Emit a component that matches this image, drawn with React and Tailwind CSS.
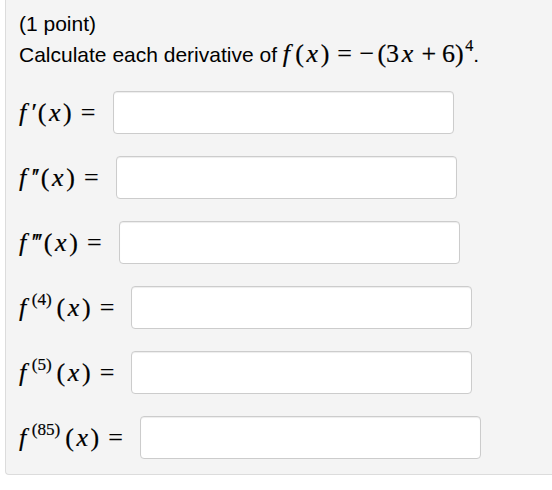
import React from "react";

const Op = ({ children, wide }) => (
  <span className={wide ? "mx-[0.35em] not-italic" : "mx-[0.22em] not-italic"}>{children}</span>
);

const X = () => <span className="italic mx-[0.1em]">x</span>;

const F = ({ order }) => (
  <span className="italic">
    <span className={order ? "mr-[0.12em]" : "mr-[0.2em]"}>f</span>
    {order && (
      <sup className="not-italic text-[0.66em] top-[-0.62em] ml-[0.14em] mr-[0.28em]">{order}</sup>
    )}
  </span>
);

const Primes = ({ n }) => (
  <span className="not-italic tracking-[-0.1em] mr-[0.12em]">{"\u2032".repeat(n)}</span>
);

const Arg = () => (
  <span>
    (<X />)
  </span>
);

const rows = [
  { label: (<><F /><Primes n={1} /><Arg /></>) },
  { label: (<><F /><Primes n={2} /><Arg /></>) },
  { label: (<><F /><Primes n={3} /><Arg /></>) },
  { label: (<><F order="(4)" /><Arg /></>) },
  { label: (<><F order="(5)" /><Arg /></>) },
  { label: (<><F order="(85)" /><Arg /></>) },
];

export default function App() {
  return (
    <div className="w-[552px] h-[490px] bg-white overflow-hidden">
      <div className="ml-[5px] w-[547px] h-[475px] bg-[#f4f4f4] border-l border-b border-[#dcdcdc] rounded-bl-[4px] pl-[13px] pt-[9px] font-['Liberation_Sans',Arial,sans-serif] text-[21px] text-black">
        <div className="leading-[30px]">(1 point)</div>
        <div className="leading-[30px] whitespace-nowrap">
          Calculate each derivative of{" "}
          <span className="[font-family:'Liberation_Serif',serif] text-[26px] [-webkit-text-stroke:0.2px_#000] whitespace-nowrap">
            <F />
            <Arg />
            <span className="mx-[0.3em]">=</span>
            <span className="mr-[0.12em]">−</span>(3<X />
            <Op>+</Op>6)
            <sup className="text-[0.62em] top-[-0.7em] ml-[0.1em]">4</sup>
          </span>
          .
        </div>
        <div className="mt-[21px] flex flex-col gap-[22px]">
          {rows.map((r, i) => (
            <div key={i} className="flex items-center h-[43px]">
              <span className="[font-family:'Liberation_Serif',serif] text-[26px] [-webkit-text-stroke:0.2px_#000] whitespace-nowrap">
                {r.label}
                <Op wide>=</Op>
              </span>
              <div className="ml-[8px] w-[341px] h-[43px] bg-white border border-[#cccccc] rounded-[4px] shadow-[inset_0_1px_1px_rgba(0,0,0,0.075)]" />
            </div>
          ))}
        </div>
      </div>
    </div>
  );
}
